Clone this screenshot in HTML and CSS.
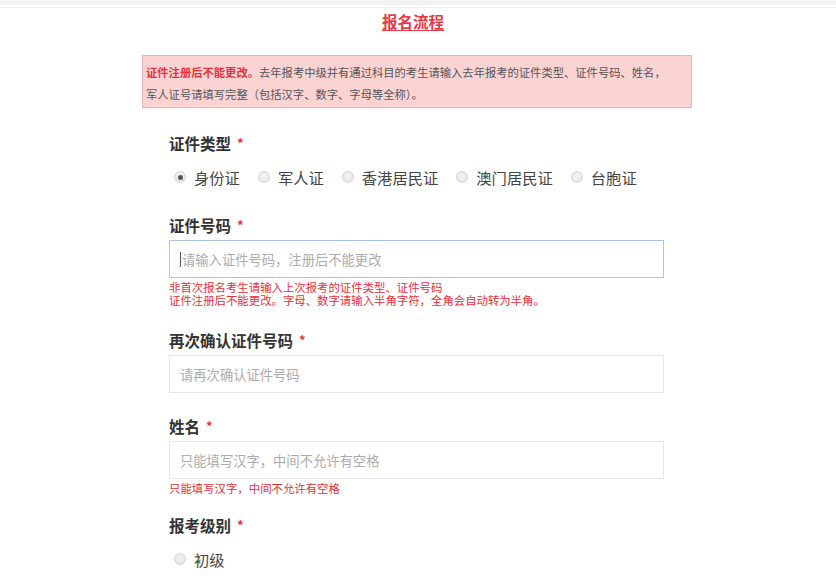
FILE: index.html
```html
<!DOCTYPE html>
<html lang="zh-CN">
<head>
<meta charset="utf-8">
<title>报名流程</title>
<link rel="stylesheet" href="styles.css">
</head>
<body>
<div class="topbar"></div>
<div class="topline"></div>
<main class="page">
  <h1 class="title"><a href="#">报名流程</a></h1>
  <div class="alert">
    <strong>证件注册后不能更改。</strong>去年报考中级并有通过科目的考生请输入去年报考的证件类型、证件号码、姓名，<br>军人证号请填写完整（包括汉字、数字、字母等全称）。
  </div>
  <form class="form">
    <div class="group group-radio">
      <div class="label">证件类型<span class="star">*</span></div>
      <div class="radios">
        <label class="radio"><input type="radio" name="idtype" checked><span>身份证</span></label>
        <label class="radio"><input type="radio" name="idtype"><span>军人证</span></label>
        <label class="radio"><input type="radio" name="idtype"><span>香港居民证</span></label>
        <label class="radio"><input type="radio" name="idtype"><span>澳门居民证</span></label>
        <label class="radio"><input type="radio" name="idtype"><span>台胞证</span></label>
      </div>
    </div>
    <div class="group group-hint">
      <div class="label">证件号码<span class="star">*</span></div>
      <div class="field focused"><input class="input" type="text" placeholder="请输入证件号码，注册后不能更改"></div>
      <div class="hint">
        <div class="hint-line">非首次报名考生请输入上次报考的证件类型、证件号码</div>
        <div class="hint-line">证件注册后不能更改。字母、数字请输入半角字符，全角会自动转为半角。</div>
      </div>
    </div>
    <div class="group group-plain">
      <div class="label">再次确认证件号码<span class="star">*</span></div>
      <div class="field"><input class="input" type="text" placeholder="请再次确认证件号码"></div>
    </div>
    <div class="group group-last-hint">
      <div class="label">姓名<span class="star">*</span></div>
      <div class="field"><input class="input" type="text" placeholder="只能填写汉字，中间不允许有空格"></div>
      <div class="hint">
        <div class="hint-line">只能填写汉字，中间不允许有空格</div>
      </div>
    </div>
    <div class="group">
      <div class="label">报考级别<span class="star">*</span></div>
      <div class="radios">
        <label class="radio"><input type="radio" name="level"><span>初级</span></label>
      </div>
    </div>
  </form>
</main>
</body>
</html>
```

FILE: styles.css
```css
* { box-sizing: border-box; }

html, body {
  margin: 0;
  padding: 0;
  background: #ffffff;
  font-family: "Noto Sans CJK SC", "Noto Sans", "Liberation Sans", sans-serif;
  color: #333333;
}

.topbar {
  height: 5px;
  background: #f3f3f3;
  margin-bottom: 2px;
}

.topline {
  height: 1px;
  background: #f0f0f0;
}

.page {
  width: 550px;
  margin: 0 auto;
  position: relative;
  left: -1px;
}

.title {
  margin: 3px 0 0;
  text-align: center;
  font-size: 15.5px;
  line-height: 20px;
  font-weight: 700;
}

.title a {
  color: #e53b48;
  text-decoration: underline;
  text-underline-offset: 2px;
  position: relative;
  left: -4px;
}

.alert {
  margin-top: 24px;
  background: #fbd3d3;
  border: 1px solid #eab6b6;
  box-shadow: 0 1px 1px rgba(0, 0, 0, 0.04);
  padding: 5px 3px 2px;
  font-size: 11.3px;
  line-height: 22px;
  color: #555555;
  white-space: nowrap;
}

.alert strong {
  color: #e4333d;
  font-weight: 700;
}

.form {
  margin-top: 25px;
  padding: 0 27px;
}

.group { margin-bottom: 23px; }
.group-radio { margin-bottom: 27px; }
.group-hint { margin-bottom: 24px; }
.group-plain { margin-bottom: 23px; }
.group-last-hint { margin-bottom: 20px; }

.label {
  font-size: 15.5px;
  line-height: 20px;
  font-weight: 700;
  color: #333333;
  margin-bottom: 5px;
}

.group-radio .label,
.group:last-child .label { margin-bottom: 13px; }

.star {
  color: #e4333d;
  font-size: 13px;
  margin-left: 6px;
  vertical-align: 2px;
}

.radios {
  display: flex;
  align-items: center;
  height: 22px;
  padding-left: 5px;
}

.radio {
  display: flex;
  align-items: center;
  margin-right: 18px;
  font-size: 15.3px;
  line-height: 22px;
  color: #444444;
}

.radio input {
  appearance: none;
  -webkit-appearance: none;
  width: 12px;
  height: 12px;
  margin: 0 8px 0 0;
  border: 1px solid #d6d6d6;
  border-radius: 50%;
  background: radial-gradient(circle at 50% 40%, #f4f4f4 0%, #e2e2e2 100%);
  display: flex;
  align-items: center;
  justify-content: center;
}

.radio input:checked::after {
  content: "";
  width: 5px;
  height: 5px;
  border-radius: 50%;
  background: #555555;
}

.field {
  position: relative;
}

.input {
  display: block;
  width: 495px;
  height: 38px;
  border: 1px solid #e6e6e6;
  border-radius: 0;
  padding: 0 10px;
  font-family: inherit;
  font-size: 13.3px;
  color: #333333;
  background: #ffffff;
  outline: none;
}

.input::placeholder {
  color: #ababab;
}

.focused .input {
  border-color: #a9c5e6;
  padding-left: 12px;
}

.focused::before {
  content: "";
  position: absolute;
  left: 11px;
  top: 12px;
  width: 1px;
  height: 15px;
  background: #555555;
}

.hint {
  margin-top: 3px;
  color: #e8303a;
}

.hint-line {
  font-size: 11.4px;
  line-height: 12.5px;
  white-space: nowrap;
}
```
